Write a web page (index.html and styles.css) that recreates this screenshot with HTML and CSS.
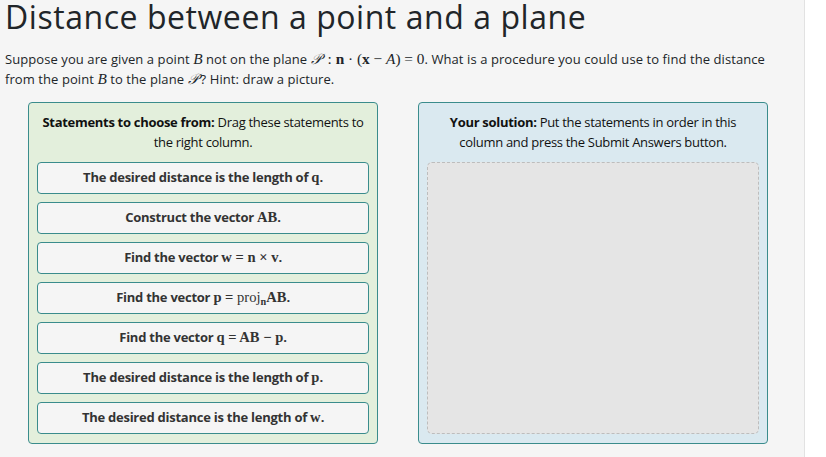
FILE: index.html
```html
<!DOCTYPE html>
<html>
<head>
<meta charset="utf-8">
<link rel="stylesheet" href="styles.css">
</head>
<body>
<div class="page">
  <h1 class="title">Distance between a point and a plane</h1>
  <p class="intro">Suppose you are given a point <span class="m"><i>B</i></span> not on the plane <span class="m"><i class="cal">𝒫</i> : <b>n</b> · (<b>x</b> − <i>A</i>) = 0</span>. What is a procedure you could use to find the distance from the point <span class="m"><i>B</i></span> to the plane <span class="m"><i class="cal">𝒫</i></span>? Hint: draw a picture.</p>
  <div class="columns">
    <div class="panel source">
      <div class="head"><b>Statements to choose from:</b> Drag these statements to the right column.</div>
      <div class="list">
        <div class="item"><span>The desired distance is the length of <span class="m"><b>q</b></span>.</span></div>
        <div class="item"><span>Construct the vector <span class="m"><b>AB</b></span>.</span></div>
        <div class="item"><span>Find the vector <span class="m"><b>w</b> = <b>n</b> × <b>v</b></span>.</span></div>
        <div class="item"><span>Find the vector <span class="m"><b>p</b> = <span class="rm">proj</span><sub><b>n</b></sub><b>AB</b></span>.</span></div>
        <div class="item"><span>Find the vector <span class="m"><b>q</b> = <b>AB</b> − <b>p</b></span>.</span></div>
        <div class="item"><span>The desired distance is the length of <span class="m"><b>p</b></span>.</span></div>
        <div class="item"><span>The desired distance is the length of <span class="m"><b>w</b></span>.</span></div>
      </div>
    </div>
    <div class="panel target">
      <div class="head"><b>Your solution:</b> Put the statements in order in this column and press the Submit Answers button.</div>
      <div class="drop"></div>
    </div>
  </div>
</div>
</body>
</html>
```
FILE: styles.css
```css
html, body {
  margin: 0;
  padding: 0;
  background: #ffffff;
}
body {
  font-family: "Open Sans", "Noto Sans", sans-serif;
  color: #212529;
}
.page {
  width: 805px;
  height: 457px;
  background: #f5f5f5;
  border-right: 1px solid #e2e2e2;
  overflow: hidden;
  box-sizing: border-box;
}
.title {
  margin: -2px 0 0 5px;
  font-size: 32px;
  font-weight: 400;
  line-height: 38px;
  letter-spacing: 0.55px;
  color: #212529;
}
.intro {
  margin: 13px 0 0 5px;
  width: 775px;
  font-size: 13px;
  line-height: 19px;
  letter-spacing: 0.08px;
}
.m {
  font-family: "Liberation Serif", "DejaVu Serif", serif;
  font-size: 1.18em;
  letter-spacing: 0;
  white-space: nowrap;
}
.m b { font-weight: 700; }
.m i { font-style: italic; }
.m .rm { font-weight: 400; }
.m sub { font-size: 0.7em; vertical-align: -0.25em; }
.cal {
  font-family: "DejaVu Sans", serif;
  font-style: normal;
  font-size: 0.95em;
  display: inline-block;
  margin-right: 3px;
}
.columns {
  display: flex;
  gap: 40px;
  margin: 13px 0 0 28px;
}
.panel {
  width: 350px;
  height: 342px;
  box-sizing: border-box;
  border: 1px solid #3a8c8c;
  border-radius: 4px;
  padding: 9px 8px 8px;
}
.source { background: #e3efdc; }
.target { background: #dae9f0; }
.head {
  font-size: 13px;
  line-height: 20px;
  text-align: center;
  letter-spacing: -0.3px;
  color: #111;
}
.head b { font-weight: 700; }
.list {
  margin-top: 10px;
  display: flex;
  flex-direction: column;
  gap: 8px;
}
.item {
  height: 32px;
  box-sizing: border-box;
  border: 1px solid #3a8c8c;
  border-radius: 4px;
  background: #f5f5f5;
  text-align: center;
  line-height: 29px;
  font-size: 13px;
  font-weight: 700;
  letter-spacing: -0.25px;
  color: #333;
}
.item .m { font-size: 1.12em; color: #333; }
.drop {
  margin-top: 10px;
  height: 272px;
  box-sizing: border-box;
  border: 1px dashed #bdbdbd;
  border-radius: 5px;
  background: #e5e5e5;
}
```
